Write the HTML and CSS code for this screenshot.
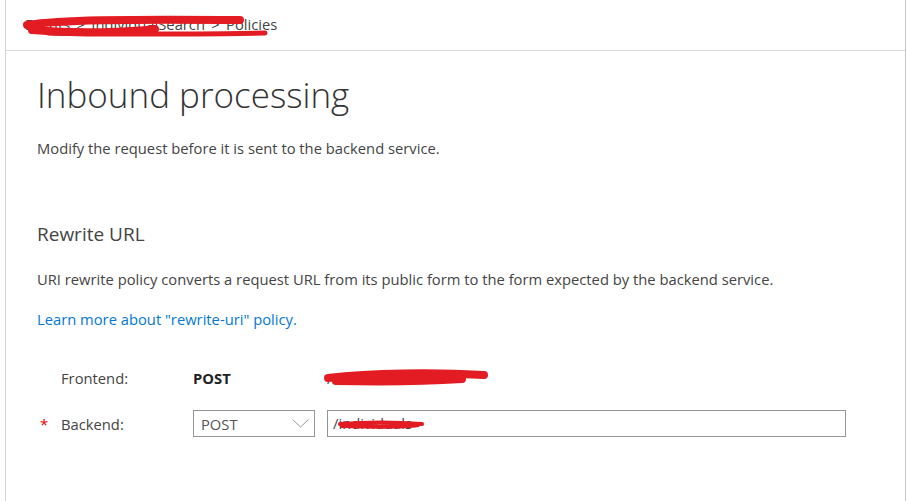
FILE: index.html
```html
<!DOCTYPE html>
<html lang="en">
<head>
    <meta charset="UTF-8">
    <meta name="viewport" content="width=device-width, initial-scale=1.0">
    <title>Inbound processing</title>
    <link rel="stylesheet" href="styles.css">
</head>
<body>
    <div class="blade">
        <div class="blade__header">
            <div class="crumbs">Events &gt; IndividualSearch &gt; Policies</div>
            <svg class="scribble scribble--crumbs" width="260" height="30" viewBox="0 0 260 30">
                <path class="thick" d="M7 13 C40 8 100 7 220 8" />
                <path class="thick" d="M12 18 C60 22 110 20 135 17" />
                <path class="thin" d="M28 21 C100 23 180 22 245 21" />
            </svg>
        </div>
        <div class="blade__body">
            <h1 class="title">Inbound processing</h1>
            <p class="desc">Modify the request before it is sent to the backend service.</p>

            <h2 class="section">Rewrite URL</h2>
            <p class="desc">URI rewrite policy converts a request URL from its public form to the form expected by the backend service.</p>
            <a class="link" href="#">Learn more about "rewrite-uri" policy.</a>

            <div class="form">
                <div class="row">
                    <span class="star"></span>
                    <span class="label">Frontend:</span>
                    <span class="method">POST</span>
                    <span class="path">/individuals
                        <svg class="scribble scribble--path" width="175" height="24" viewBox="0 0 175 24">
                            <path d="M6 12 C50 7 110 6 162 9 M14 15 C60 16 110 15 140 13" />
                        </svg>
                    </span>
                </div>
                <div class="row">
                    <span class="star">*</span>
                    <span class="label">Backend:</span>
                    <div class="select">
                        <span>POST</span>
                        <svg class="chevron" width="17" height="9" viewBox="0 0 17 9">
                            <polyline points="0.5,0.5 8.5,8 16.5,0.5" />
                        </svg>
                    </div>
                    <div class="input">/individuals
                        <svg class="scribble scribble--input" width="90" height="12" viewBox="0 0 90 12">
                            <path d="M4 5 C30 3 60 3 86 5 M6 7 C40 8 70 8 82 6" />
                        </svg>
                    </div>
                </div>
            </div>
        </div>
    </div>
</body>
</html>
```

FILE: styles.css
```css
body {
    margin: 0;
    background-color: #fff;
    font-family: "Open Sans", "Noto Sans", sans-serif;
    color: #333;
}
.blade {
    margin-left: 5px;
    width: 899px;
    height: 501px;
    border-left: 1px solid #d6d6d6;
    border-right: 1px solid #c6c6c6;
}
.blade__header {
    position: relative;
    height: 51px;
    border-bottom: 1px solid #dadada;
    box-sizing: border-box;
}
.crumbs {
    padding: 14px 0 0 19px;
    font-size: 14.75px;
    line-height: 20px;
    word-spacing: 2.5px;
    color: #444;
}
.scribble path,
.scribble polyline {
    fill: none;
    stroke: #e31b23;
    stroke-linecap: round;
}
.scribble {
    position: absolute;
}
.scribble--crumbs {
    left: 14px;
    top: 12px;
}
.scribble--crumbs .thick {
    stroke-width: 8;
}
.scribble--crumbs .thin {
    stroke-width: 5;
}
.blade__body {
    padding-left: 31px;
}
.title {
    margin: 20px 0 0;
    font-size: 35px;
    font-weight: 300;
    color: #333;
    line-height: 48px;
}
.desc {
    margin: 19px 0 0;
    font-size: 14.75px;
    line-height: 20px;
    color: #444;
}
.section {
    margin: 62px 0 0;
    font-size: 19px;
    font-weight: 400;
    line-height: 28px;
    color: #444;
}
.section + .desc {
    margin-top: 21px;
}
.link {
    display: block;
    margin-top: 20px;
    font-size: 14.75px;
    line-height: 20px;
    color: #0078d4;
    text-decoration: none;
}
.form {
    margin-top: 36px;
}
.row {
    display: grid;
    grid-template-columns: 24px 132px 134px 519px;
    align-items: center;
    font-size: 14.75px;
    color: #444;
    min-height: 26px;
}
.row + .row {
    margin-top: 19px;
}
.star {
    color: #e00;
    font-size: 15px;
    padding-left: 3px;
}
.method {
    font-weight: 700;
    color: #222;
}
.path {
    position: relative;
}
.scribble--path {
    left: -5px;
    top: -2px;
}
.scribble--path path {
    stroke-width: 8;
}
.select {
    display: flex;
    align-items: center;
    justify-content: space-between;
    box-sizing: border-box;
    width: 122px;
    height: 27px;
    padding: 0 5px 0 7px;
    border: 1px solid #949494;
    color: #555;
}
.chevron polyline {
    fill: none;
    stroke: #999;
    stroke-width: 1;
}
.input {
    position: relative;
    box-sizing: border-box;
    height: 27px;
    line-height: 25px;
    padding-left: 5px;
    border: 1px solid #949494;
    color: #444;
}
.scribble--input {
    left: 8px;
    top: 8px;
}
.scribble--input path {
    stroke-width: 4;
}
```
